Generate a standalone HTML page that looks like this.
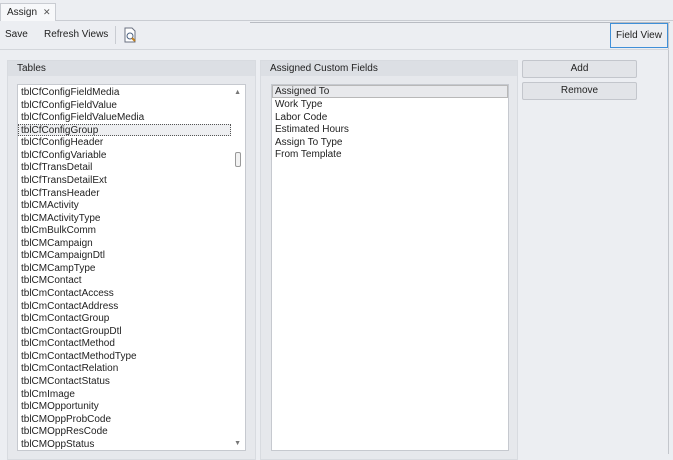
<!DOCTYPE html>
<html><head><style>
*{margin:0;padding:0;box-sizing:border-box}
body{width:673px;height:454px;background:#eceef2;font-family:"Liberation Sans",sans-serif;font-size:10px;color:#222;position:relative;overflow:hidden}
.a{position:absolute;white-space:nowrap}
.tab{left:0;top:3px;width:56px;height:18px;background:#f7f8fa;border:1px solid #c9ccd2;border-bottom:none;padding:3px 0 0 6px}
.gb{background:#e6e8ec;border:1px solid #d8dbe0}
.gh{background:#dcdfe4;height:15px;padding:2px 0 0 9px}
.list{background:#fff;border:1px solid #c6c9cf}
.row{height:12.57px;line-height:13px;padding-left:3px;white-space:nowrap}
.btn{background:#e2e4e8;border:1px solid #c3c6cc;text-align:center;line-height:15px;border-radius:2px}
</style></head><body>
<div class="a" style="left:0;top:20px;width:673px;height:1px;background:#c9ccd2"></div>
<div class="a tab">Assign <span style="position:absolute;left:42px;top:3px;color:#555;font-size:9px">✕</span></div>
<div class="a" style="left:5px;top:29px">Save</div>
<div class="a" style="left:44px;top:29px">Refresh Views</div>
<div class="a" style="left:115px;top:26px;width:1px;height:18px;background:#c9ccd2"></div>
<svg class="a" style="left:123px;top:27px" width="14" height="16" viewBox="0 0 14 16"><path d="M2 1h7l3 3v11H2z" fill="#fff" stroke="#6a7080"/><circle cx="7" cy="9" r="3" fill="none" stroke="#4a6080"/><path d="M9 11l3 3" stroke="#c08020" stroke-width="2"/></svg>
<div class="a" style="left:250px;top:22px;width:420px;height:1px;background:#b8bbc2"></div>
<div class="a" style="left:668px;top:22px;width:1px;height:432px;background:#c3c6cc"></div>
<div class="a" style="left:0;top:49px;width:669px;height:1px;background:#d3d6db"></div>
<div class="a" style="left:610px;top:23px;width:58px;height:25px;border:1px solid #3f8fd8;text-align:center;line-height:23px">Field View</div>

<div class="a gb" style="left:7px;top:60px;width:249px;height:400px"><div class="gh">Tables</div></div>
<div class="a list" style="left:17px;top:84px;width:229px;height:367px;padding-top:1px">
<div class="row">tblCfConfigFieldMedia</div><div class="row">tblCfConfigFieldValue</div><div class="row">tblCfConfigFieldValueMedia</div>
<div class="row" style="background:#eeeff1;outline:1px dotted #555;outline-offset:-1px;margin-right:14px">tblCfConfigGroup</div>
<div class="row">tblCfConfigHeader</div><div class="row">tblCfConfigVariable</div><div class="row">tblCfTransDetail</div><div class="row">tblCfTransDetailExt</div><div class="row">tblCfTransHeader</div><div class="row">tblCMActivity</div><div class="row">tblCMActivityType</div><div class="row">tblCmBulkComm</div><div class="row">tblCMCampaign</div><div class="row">tblCMCampaignDtl</div><div class="row">tblCMCampType</div><div class="row">tblCMContact</div><div class="row">tblCmContactAccess</div><div class="row">tblCmContactAddress</div><div class="row">tblCmContactGroup</div><div class="row">tblCmContactGroupDtl</div><div class="row">tblCmContactMethod</div><div class="row">tblCmContactMethodType</div><div class="row">tblCmContactRelation</div><div class="row">tblCMContactStatus</div><div class="row">tblCmImage</div><div class="row">tblCMOpportunity</div><div class="row">tblCMOppProbCode</div><div class="row">tblCMOppResCode</div><div class="row">tblCMOppStatus</div>
<div class="a" style="right:4px;top:4px;font-size:7px;color:#777">▲</div>
<div class="a" style="right:4px;bottom:3px;font-size:7px;color:#777">▼</div>
<div class="a" style="right:4px;top:67px;width:6px;height:15px;border:1px solid #999;border-radius:2px;background:#f2f2f2"></div>
</div>

<div class="a gb" style="left:260px;top:60px;width:258px;height:400px"><div class="gh">Assigned Custom Fields</div></div>
<div class="a list" style="left:271px;top:84px;width:238px;height:367px">
<div class="row" style="background:#e8e9ec;border:1px solid #b8b8b8;height:13px;line-height:11px;padding-left:2px">Assigned To</div>
<div class="row">Work Type</div><div class="row">Labor Code</div><div class="row">Estimated Hours</div><div class="row">Assign To Type</div><div class="row">From Template</div>
</div>
<div class="a btn" style="left:522px;top:60px;width:115px;height:18px">Add</div>
<div class="a btn" style="left:522px;top:82px;width:115px;height:18px">Remove</div>
</body></html>
